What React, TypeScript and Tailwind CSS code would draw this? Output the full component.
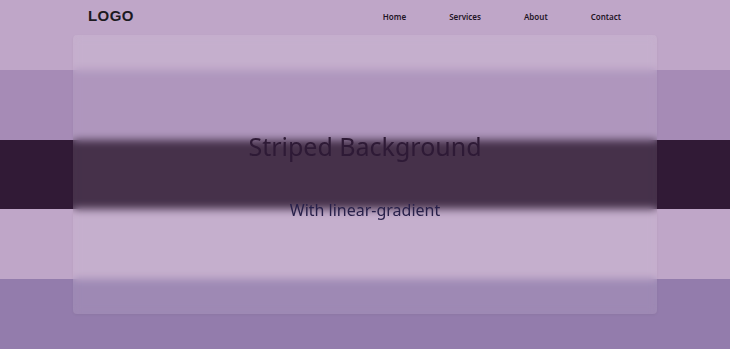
export default function App() {
  const links = ["Home", "Services", "About", "Contact"];

  return (
    <div className="relative h-[349px] w-full overflow-hidden bg-[linear-gradient(to_bottom,#bfa6c8_0_20%,#a68bb6_20%_40%,#311a36_40%_60%,#bfa6c8_60%_80%,#937cac_80%_100%)] font-['Noto_Sans',sans-serif]">
      {/* Header */}
      <header className="absolute left-0 right-0 top-0 z-10 mx-auto flex h-[31px] w-[584px] items-center justify-between pl-[15px] pr-[36px]">
        <span className="font-['Liberation_Sans',Arial,sans-serif] text-[15px] font-bold leading-none tracking-[0.4px] text-[#1c1a1f]">
          LOGO
        </span>
        <nav className="mt-[2px] flex gap-[43px]">
          {links.map((l) => (
            <a key={l} className="text-[8px] font-semibold text-[#1f1526]">
              {l}
            </a>
          ))}
        </nav>
      </header>

      {/* Hero card */}
      <div className="flex h-full items-center justify-center">
        <div className="flex h-[279px] w-[584px] flex-col items-center rounded-[4px] bg-white/10 pt-[95px] shadow-[0_1px_3px_rgba(0,0,0,0.05)] backdrop-blur-[4px]">
          <h1 className="text-[25px] font-normal leading-[32px] text-[#2e1a36]">
            Striped Background
          </h1>
          <p className="mt-[36px] text-[16px] leading-[24px] text-[#28204a]">
            With linear-gradient
          </p>
        </div>
      </div>
    </div>
  );
}
